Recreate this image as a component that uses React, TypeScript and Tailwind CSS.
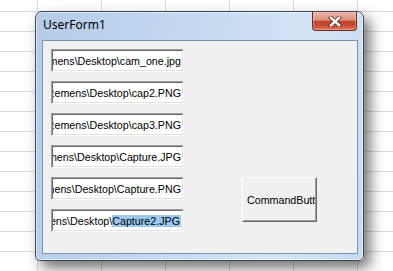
import React from "react";

function TextBox({ pre, sel }: { pre: string; sel?: string }) {
  return (
    <div className="w-[133px] h-[23px] border border-t-[#a0a0a0] border-l-[#a0a0a0] border-r-white border-b-white">
      <div className="h-full border border-t-[#696969] border-l-[#696969] border-r-[#e3e3e3] border-b-[#e3e3e3] bg-white overflow-hidden flex items-center justify-end pr-[1px]">
        <span className="shrink-0 whitespace-nowrap text-[10.7px] leading-[13px] text-black pt-[1px]">
          {pre}
          {sel ? <span className="bg-[#99c9ef] pr-[1px]">{sel}</span> : null}
        </span>
      </div>
    </div>
  );
}

function CloseButton() {
  return (
    <div className="w-[45px] h-[19px] rounded-b-[4px] border border-t-0 border-[#6e2a1f] bg-[linear-gradient(to_bottom,#ecb4a6_0%,#df8f7d_45%,#c3432b_52%,#c84b31_75%,#e0795b_100%)] shadow-[inset_0_0_0_1px_rgba(255,220,210,0.35)] flex items-center justify-center">
      <svg width="14" height="11" viewBox="0 0 14 11">
        <path d="M3 1.8 L11 9.2 M11 1.8 L3 9.2" stroke="#6b3a32" strokeWidth="4.2" strokeLinecap="square" fill="none" />
        <path d="M3 1.8 L11 9.2 M11 1.8 L3 9.2" stroke="#ffffff" strokeWidth="2.4" strokeLinecap="square" fill="none" />
      </svg>
    </div>
  );
}

export default function App() {
  const boxes: { pre: string; sel?: string }[] = [
    { pre: "C:\\Users\\zemens\\Desktop\\cam_one.jpg" },
    { pre: "C:\\Users\\zemens\\Desktop\\cap2.PNG" },
    { pre: "C:\\Users\\zemens\\Desktop\\cap3.PNG" },
    { pre: "C:\\Users\\zemens\\Desktop\\Capture.JPG" },
    { pre: "C:\\Users\\zemens\\Desktop\\Capture.PNG" },
    { pre: "C:\\Users\\zemens\\Desktop\\", sel: "Capture2.JPG" },
  ];
  return (
    <div className="relative w-[393px] h-[271px] overflow-hidden bg-white bg-[linear-gradient(to_right,#d9d9d9_1px,transparent_1px),linear-gradient(to_bottom,#d9d9d9_1px,transparent_1px)] bg-size-[64px_20px] bg-position-[37px_11px] font-['Liberation_Sans',Arial,sans-serif]">
      <div className="absolute left-[35px] top-[11px] w-[329px] h-[250px] rounded-t-[7px] rounded-b-[5px] border border-[#3f4853] bg-[linear-gradient(100deg,#b4cce7_0%,#c3d8ef_40%,#d3e4f6_75%,#c6dbf1_100%)] shadow-[6px_7px_14px_rgba(0,0,0,0.55),inset_0_0_0_1px_rgba(255,255,255,0.55)] flex flex-col">
        <div className="h-[28px] flex items-start justify-between pl-[7px] pr-[6px]">
          <span className="mt-[5px] text-[12px] leading-[16px] text-black font-['Noto_Sans','Open_Sans',sans-serif]">
            UserForm1
          </span>
          <CloseButton />
        </div>
        <div className="flex-1 ml-[6px] mr-[5px] mb-[6px] border border-[#7f93ab] bg-[#f0f0f0] flex items-start">
          <div className="flex flex-col gap-[9px] pl-[8px] pt-[8px]">
            {boxes.map((b, i) => (
              <TextBox key={i} pre={b.pre} sel={b.sel} />
            ))}
          </div>
          <div className="ml-[58px] mt-[136px] w-[75px] h-[45px] border border-t-white border-l-white border-r-[#696969] border-b-[#696969]">
            <div className="h-full border border-t-[#f0f0f0] border-l-[#f0f0f0] border-r-[#a0a0a0] border-b-[#a0a0a0] flex items-center overflow-hidden pl-[3px] pt-[2px]">
              <span className="shrink-0 whitespace-nowrap text-[10.7px] leading-[13px] text-black">CommandButton1</span>
            </div>
          </div>
        </div>
      </div>
    </div>
  );
}
